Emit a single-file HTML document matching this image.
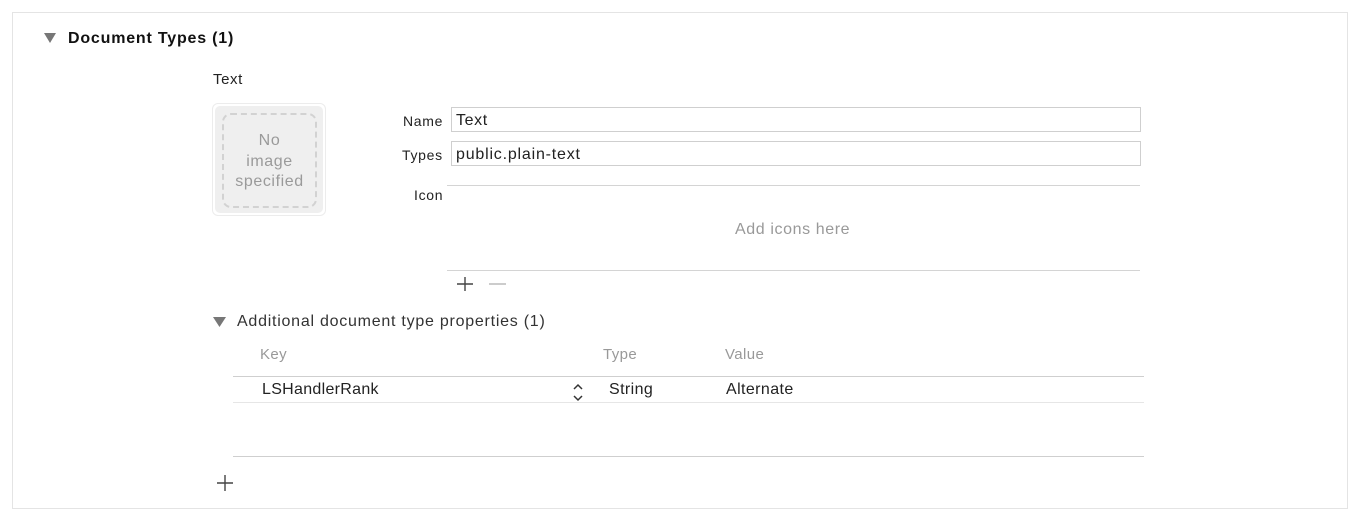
<!DOCTYPE html>
<html><head><style>
body{margin:0;width:1360px;height:521px;background:#fff;font-family:"Liberation Sans",sans-serif;position:relative;overflow:hidden;color:#222}
.a{position:absolute;white-space:nowrap}
.l{position:absolute;height:1px;background:#d4d4d4}
</style></head><body>
<div class="a" style="left:12px;top:12px;width:1334px;height:495px;border:1px solid #e4e4e4"></div>
<svg class="a" style="left:44px;top:33px" width="12" height="11"><polygon points="0,0 12,0 6,10" fill="#777"/></svg>
<div class="a" style="left:68px;top:30px;font-size:16px;font-weight:bold;color:#111;letter-spacing:0.8px">Document Types (1)</div>
<div class="a" style="left:213px;top:71px;font-size:15px;letter-spacing:0.6px">Text</div>
<div class="a" style="left:212px;top:103px;width:112px;height:111px;border:1px solid #ececec;border-radius:6px"></div>
<div class="a" style="left:215px;top:106px;width:108px;height:107px;background:#efefef;border-radius:5px"></div>
<div class="a" style="left:222px;top:113px;border:2px dashed #d2d2d2;border-radius:9px;text-align:center;color:#9a9a9a;font-size:16px;letter-spacing:0.6px;line-height:20.5px;padding-top:16px;box-sizing:border-box;width:95px;height:95px">No<br>image<br>specified</div>
<div class="a" style="left:403px;top:113px;font-size:14px;letter-spacing:0.7px">Name</div>
<div class="a" style="left:451px;top:107px;width:690px;height:25px;border:1px solid #cfcfcf;box-sizing:border-box"></div>
<div class="a" style="left:456px;top:112px;font-size:16px;letter-spacing:0.6px">Text</div>
<div class="a" style="left:402px;top:147px;font-size:14px;letter-spacing:0.7px">Types</div>
<div class="a" style="left:451px;top:141px;width:690px;height:25px;border:1px solid #cfcfcf;box-sizing:border-box"></div>
<div class="a" style="left:456px;top:146px;font-size:16px;letter-spacing:0.8px">public.plain-text</div>
<div class="a" style="left:414px;top:187px;font-size:14px;letter-spacing:0.7px">Icon</div>
<div class="l" style="left:447px;top:185px;width:693px"></div>
<div class="a" style="left:735px;top:221px;font-size:16px;color:#999;letter-spacing:0.6px">Add icons here</div>
<div class="l" style="left:447px;top:270px;width:693px"></div>
<svg class="a" style="left:456px;top:276px" width="50" height="16"><path d="M9 1V15M1 8H17" stroke="#444" stroke-width="1.4"/><path d="M33 8H50" stroke="#bbb" stroke-width="1.4"/></svg>
<svg class="a" style="left:213px;top:317px" width="13" height="11"><polygon points="0,0 13,0 6.5,10" fill="#777"/></svg>
<div class="a" style="left:237px;top:313px;font-size:16px;color:#333;letter-spacing:0.75px">Additional document type properties (1)</div>
<div class="a" style="left:260px;top:346px;font-size:15px;color:#999;letter-spacing:0.4px">Key</div>
<div class="a" style="left:603px;top:346px;font-size:15px;color:#999;letter-spacing:0.4px">Type</div>
<div class="a" style="left:725px;top:346px;font-size:15px;color:#999;letter-spacing:0.4px">Value</div>
<div class="l" style="left:233px;top:376px;width:911px;background:#cfcfcf"></div>
<div class="a" style="left:262px;top:381px;font-size:16px;letter-spacing:0.3px">LSHandlerRank</div>
<svg class="a" style="left:572px;top:383px" width="12" height="19"><path d="M2 6L6 2L10 6M2 13L6 17L10 13" stroke="#333" stroke-width="1.5" fill="none"/></svg>
<div class="a" style="left:609px;top:381px;font-size:16px;letter-spacing:0.4px">String</div>
<div class="a" style="left:726px;top:381px;font-size:16px;letter-spacing:0.4px">Alternate</div>
<div class="l" style="left:233px;top:402px;width:911px;background:#e6e6e6"></div>
<div class="l" style="left:233px;top:456px;width:911px;background:#cfcfcf"></div>
<svg class="a" style="left:216px;top:474px" width="18" height="18"><path d="M9 1V17M1 9H17" stroke="#444" stroke-width="1.4"/></svg>
</body></html>
